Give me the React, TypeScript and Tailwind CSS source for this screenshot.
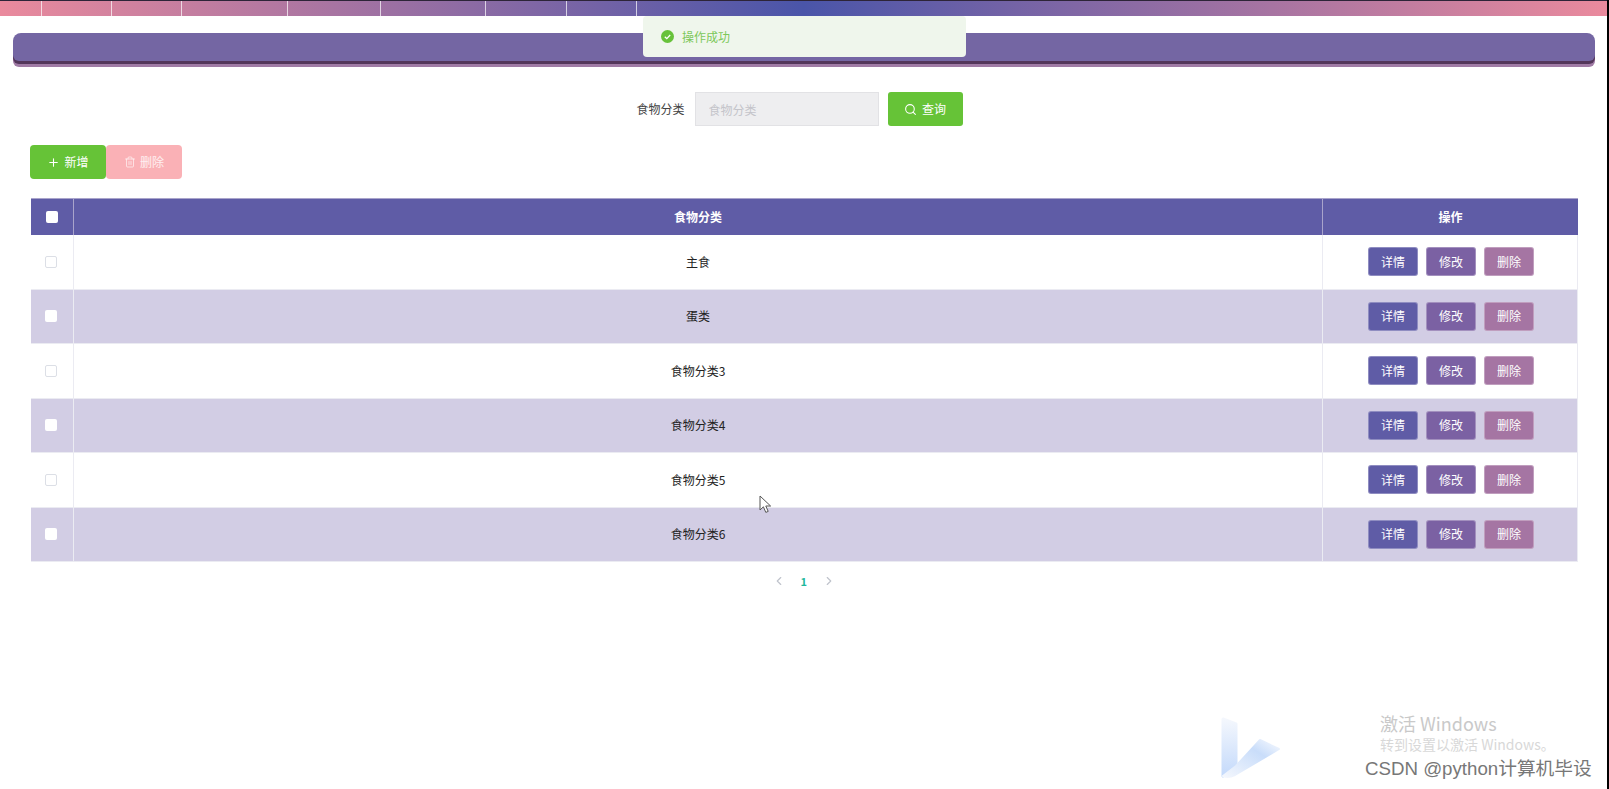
import { ChevronLeft, ChevronRight, Plus, Search, Trash2 } from "lucide-react";

const navWidths = ["w-[42px]", "w-[70px]", "w-[70px]", "w-[106px]", "w-[93px]", "w-[105px]", "w-[81px]", "w-[70px]"];
const rows = ["主食", "蛋类", "食物分类3", "食物分类4", "食物分类5", "食物分类6"];

function RowButton({ label, color }: { label: string; color: string }) {
  return (
    <button className={`h-[29px] w-[50px] rounded-[3px] border border-white/30 text-xs text-white ${color}`}>
      {label}
    </button>
  );
}

export default function App() {
  return (
    <div className="relative flex h-[789px] overflow-hidden bg-white font-['Noto_Sans_CJK_SC',sans-serif] text-xs">
      <div className="min-w-0 flex-1">
        {/* Top nav strip */}
        <div className="flex h-4 border-t border-[#2d2438] bg-[linear-gradient(90deg,#ea8a9d_0%,#4a55a9_50%,#ea8a9d_100%)]">
          {navWidths.map((w, i) => (
            <div key={i} className={`${w} border-r border-white/70`} />
          ))}
        </div>

        {/* Title bar */}
        <div className="mx-[13px] mt-[17px] h-7 w-[1582px] rounded-t-lg rounded-b-[6px] bg-[#7466a3] shadow-[0_3px_0_#53365a,0_6px_0_#a07ba5]" />

        {/* Search */}
        <div className="mt-[31px] flex h-[34px] items-center justify-center pr-[8px]">
          <span className="mr-[10px] text-[#444]">食物分类</span>
          <input
            disabled
            placeholder="食物分类"
            className="h-[34px] w-[184px] border border-[#e2e2e5] bg-[#eeeef0] px-[13px] text-xs placeholder:text-[#c4c4ca]"
          />
          <button className="ml-[9px] flex h-[34px] w-[75px] items-center justify-center gap-[5px] rounded-[3px] bg-[#66c337] text-white">
            <Search size={13} />
            查询
          </button>
        </div>

        <div className="px-[30px]">
          {/* Toolbar */}
          <div className="mt-[19px] flex h-[34px]">
            <button className="flex w-[76px] items-center justify-center gap-1 rounded-[4px] bg-[#66c337] text-white">
              <Plus size={13} />
              新增
            </button>
            <button className="flex w-[76px] items-center justify-center gap-1 rounded-[4px] bg-[#fab1b6] text-white/80">
              <Trash2 size={12} strokeWidth={1.5} />
              删除
            </button>
          </div>

          {/* Table */}
          <div className="mt-[19px] ml-px w-[1547px]">
            <div className="grid h-[37px] grid-cols-[43px_1fr_256px] border-t border-[#a9a4cb] bg-[#5f5ca6] font-bold text-white">
              <div className="flex items-center justify-center border-r border-[#a9a4cb] pr-px">
                <span className="h-3 w-3 rounded-[2px] bg-white" />
              </div>
              <div className="flex items-center justify-center">食物分类</div>
              <div className="flex items-center justify-center border-l border-[#a9a4cb]">操作</div>
            </div>
            {rows.map((name, i) => (
              <div
                key={name}
                className={`grid h-[54.5px] grid-cols-[43px_1fr_256px] border-b border-[#ebebf2] text-[#222] ${
                  i % 2 === 1 ? "bg-[#d2cde4]" : "bg-white"
                }`}
              >
                <div className="flex items-center justify-center border-r border-[#ebebf2] pr-[2px]">
                  <span
                    className={`h-3 w-3 rounded-[2px] ${
                      i % 2 === 1 ? "bg-white" : "border border-[#dcdfe6] bg-white"
                    }`}
                  />
                </div>
                <div className="flex items-center justify-center">{name}</div>
                <div className="flex items-center justify-center gap-2 border-r border-l border-[#ebebf2] pl-[2px]">
                  <RowButton label="详情" color="bg-[#5f5ca6]" />
                  <RowButton label="修改" color="bg-[#7b61a3]" />
                  <RowButton label="删除" color="bg-[#a575a3]" />
                </div>
              </div>
            ))}
          </div>

          {/* Pagination */}
          <div className="mt-[12px] flex items-center justify-center gap-[15px] text-[#c0c4cc]">
            <ChevronLeft size={14} />
            <span className="w-[6px] text-center text-[11px] font-bold text-[#1fb89b]">1</span>
            <ChevronRight size={14} />
          </div>
        </div>
      </div>

      {/* Black edge of the captured window */}
      <div className="w-[2px] bg-black" />

      {/* Toast */}
      <div className="absolute top-4 left-[643px] flex h-[41px] w-[323px] items-center gap-2 rounded-[4px] bg-[#eff6ec] pl-[18px] text-[#7dc85a]">
        <svg width="13" height="13" viewBox="0 0 13 13">
          <circle cx="6.5" cy="6.5" r="6.5" fill="#67c23a" />
          <path d="M3.8 6.7l2 1.9 3.4-3.6" fill="none" stroke="#fff" strokeWidth="1.3" />
        </svg>
        操作成功
      </div>

      {/* Mouse cursor */}
      <svg className="absolute top-[495px] left-[759px]" width="13" height="19" viewBox="0 0 13 19">
        <path d="M1 1v14l3.4-3.2 2.4 5.6 2.4-1-2.4-5.4h4.8z" fill="#fff" stroke="#555" strokeWidth="1" />
      </svg>

      {/* Watermarks */}
      <svg className="absolute top-[714px] left-[1219px]" width="64" height="66" viewBox="0 0 64 66">
        <defs>
          <linearGradient id="bar" x1="0" y1="0" x2="0" y2="1">
            <stop offset="0" stopColor="#f4f7fd" />
            <stop offset="1" stopColor="#c4dafb" />
          </linearGradient>
          <linearGradient id="wing" x1="0" y1="1" x2="1" y2="0">
            <stop offset="0" stopColor="#f4f7fd" />
            <stop offset="0.65" stopColor="#c9ddfa" />
            <stop offset="1" stopColor="#f8fafe" />
          </linearGradient>
        </defs>
        <path d="M4 5l13 5v42l-13 10z" fill="url(#bar)" stroke="url(#bar)" strokeWidth="3" strokeLinejoin="round" />
        <path d="M4 62c4 2 8 1 12-1l44-26-19-9-24 26z" fill="url(#wing)" stroke="url(#wing)" strokeWidth="2" strokeLinejoin="round" />
      </svg>
      <div className="absolute top-[713px] left-[1380px] text-[18px] leading-[20px] text-[#c9c9c9]">激活 Windows</div>
      <div className="absolute top-[736px] left-[1380px] text-[14px] leading-[16px] text-[#d8d8d8]">转到设置以激活 Windows。</div>
      <div className="absolute top-[757px] left-[1365px] font-['Liberation_Sans','Noto_Sans_CJK_SC',sans-serif] text-[18.7px] leading-[24px] text-[#777]">
        CSDN @python计算机毕设
      </div>
    </div>
  );
}
